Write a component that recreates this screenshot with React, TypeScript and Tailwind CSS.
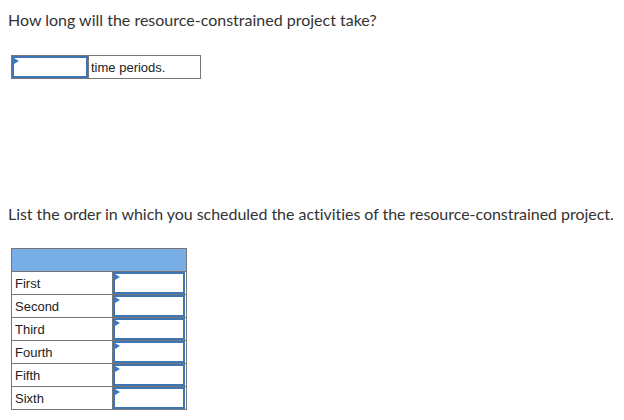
import React from 'react';

const rows = ['First', 'Second', 'Third', 'Fourth', 'Fifth', 'Sixth'];

function Marker() {
  return (
    <span className="absolute left-0 top-0 h-0 w-0 border-y-[3px] border-l-[5px] border-y-transparent border-l-[#3b78c6]" />
  );
}

function BlueInput({ w }: { w: string }) {
  return (
    <div className={`relative h-[22px] ${w} border-2 border-[#3f74b5] bg-white`}>
      <Marker />
    </div>
  );
}

export default function App() {
  return (
    <div className="min-h-[420px] w-[624px] bg-white px-2 text-[#333]" style={{ fontFamily: 'Lato, "Open Sans", sans-serif' }}>
      <p className="whitespace-nowrap pt-[11px] text-[16px] leading-[18px]">How long will the resource-constrained project take?</p>

      <div className="ml-[3px] mt-[26px] flex w-fit border border-[#777]">
        <BlueInput w="w-[76px]" />
        <div
          className="flex h-[22px] w-[112px] items-center border-l border-[#777] pl-[2px] pt-px text-[13px] text-[#222]"
          style={{ fontFamily: '"Liberation Sans", Arial, sans-serif' }}
        >
          time periods.
        </div>
      </div>

      <p className="mt-[126px] whitespace-nowrap text-[16px] leading-[18px] tracking-[-0.04px]">
        List the order in which you scheduled the activities of the resource-constrained project.
      </p>

      <div
        className="ml-[3px] mt-[25px] w-[176px] border border-[#777] text-[13px] text-[#222]"
        style={{ fontFamily: '"Liberation Sans", Arial, sans-serif' }}
      >
        <div className="h-[22px] bg-[#79ade6]" />
        {rows.map(r => (
          <div key={r} className="flex border-t border-[#777]">
            <div className="flex h-[22px] w-[101px] items-center border-r border-[#777] pl-[3px] pt-px">{r}</div>
            <BlueInput w="w-[72px]" />
          </div>
        ))}
      </div>
    </div>
  );
}
